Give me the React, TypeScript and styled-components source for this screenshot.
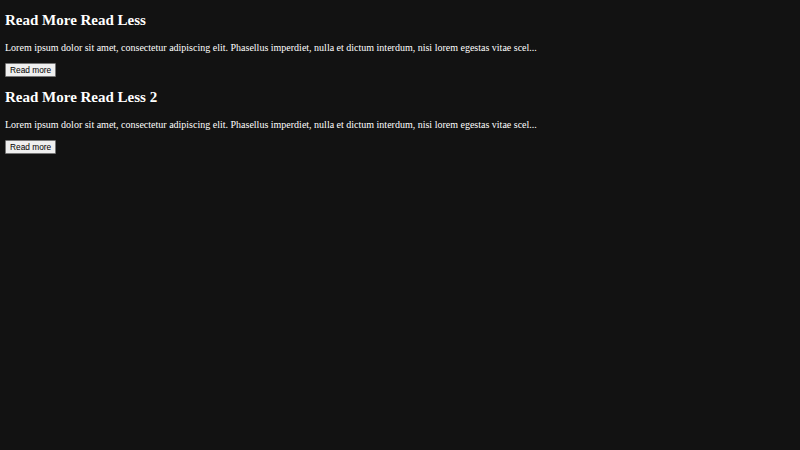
import React, { useState } from 'react';
import styled, { createGlobalStyle } from 'styled-components';

const GlobalStyle = createGlobalStyle`
  html, body {
    background: #121212;
  }
  body {
    margin: 0;
    color: #ffffff;
    font-family: "Liberation Serif", "Times New Roman", serif;
    font-size: 10px;
  }
`

const Page = styled.main`
  display: flow-root;
  padding: 0 5px;
`

const Section = styled.section`
  display: block;
`

const Title = styled.h2`
  font-size: 15px;
  font-weight: bold;
  line-height: normal;
  margin: 12.45px 0;
`

const Text = styled.p`
  font-size: 10px;
  line-height: normal;
  margin: 10px 0;
`

const ToggleButton = styled.button`
  display: inline-block;
  font-family: "Liberation Sans", Arial, sans-serif;
  font-size: 8.33px;
  line-height: normal;
  color: #000000;
  background: #efefef;
  border: 1px solid #767676;
  border-radius: 1px;
  padding: 1px 4px;
  margin: 0;
  cursor: pointer;
`

const LOREM =
  'Lorem ipsum dolor sit amet, consectetur adipiscing elit. Phasellus imperdiet, nulla et dictum interdum, nisi lorem egestas vitae scelerisque enim ligula venenatis dolor. Maecenas nisl est, ultrices nec congue eget, auctor vitae massa.'

const LIMIT = 133

function ReadMore({ title, text }: { title: string; text: string }) {
  const [open, setOpen] = useState(false)
  const shown = open ? text : text.slice(0, LIMIT) + '...'
  return (
    <Section>
      <Title>{title}</Title>
      <Text>{shown}</Text>
      <ToggleButton onClick={() => setOpen(!open)}>
        {open ? 'Read less' : 'Read more'}
      </ToggleButton>
    </Section>
  )
}

export default function App() {
  return (
    <Page>
      <GlobalStyle />
      <ReadMore title="Read More Read Less" text={LOREM} />
      <ReadMore title="Read More Read Less 2" text={LOREM} />
    </Page>
  )
}
